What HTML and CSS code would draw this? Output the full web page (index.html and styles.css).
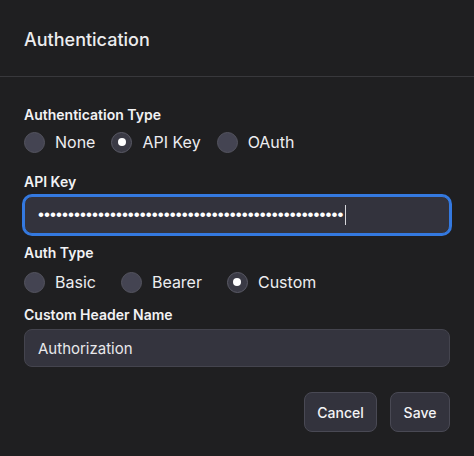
FILE: index.html
```html
<!DOCTYPE html>
<html lang="en">
<head>
<meta charset="utf-8">
<title>Authentication</title>
<link rel="stylesheet" href="styles.css">
</head>
<body>
<div class="dialog">
  <div class="header">
    <h2 class="title">Authentication</h2>
  </div>
  <div class="content">
    <div class="field">
      <div class="label">Authentication Type</div>
      <div class="radios radios-a">
        <label class="opt"><span class="radio"></span><span class="opt-text">None</span></label>
        <label class="opt"><span class="radio checked"></span><span class="opt-text">API Key</span></label>
        <label class="opt"><span class="radio"></span><span class="opt-text">OAuth</span></label>
      </div>
    </div>
    <div class="field field-key">
      <div class="label">API Key</div>
      <div class="input focused"><span class="dots">•••••••••••••••••••••••••••••••••••••••••••••••••••</span><span class="caret"></span></div>
    </div>
    <div class="field field-auth">
      <div class="label">Auth Type</div>
      <div class="radios radios-b">
        <label class="opt"><span class="radio"></span><span class="opt-text">Basic</span></label>
        <label class="opt"><span class="radio"></span><span class="opt-text">Bearer</span></label>
        <label class="opt"><span class="radio checked"></span><span class="opt-text">Custom</span></label>
      </div>
    </div>
    <div class="field field-header">
      <div class="label">Custom Header Name</div>
      <div class="input"><span class="value">Authorization</span></div>
    </div>
    <div class="actions">
      <button class="btn btn-cancel">Cancel</button>
      <button class="btn btn-save">Save</button>
    </div>
  </div>
</div>
</body>
</html>
```
FILE: styles.css
```css
* { box-sizing: border-box; }
html, body {
  margin: 0;
  padding: 0;
  background: #1f1f21;
}
body {
  font-family: Inter, "Noto Sans", sans-serif;
  color: #ececee;
  width: 474px;
  height: 456px;
  overflow: hidden;
}
.dialog {
  width: 474px;
  height: 456px;
  background: #1f1f21;
}
.header {
  height: 77px;
  padding: 0 24px;
  display: flex;
  align-items: center;
  border-bottom: 1px solid #38383c;
}
.title {
  margin: 0;
  padding-top: 4px;
  font-size: 18px;
  font-weight: 500;
  line-height: 24px;
  color: #ececee;
}
.content {
  padding: 28px 24px 0;
  display: flex;
  flex-direction: column;
}
.field {
  display: flex;
  flex-direction: column;
}
.label {
  font-size: 14px;
  font-weight: 600;
  line-height: 20px;
  color: #f2f2f4;
}
.radios {
  display: flex;
  align-items: center;
  margin-top: 6px;
  height: 22px;
}
.radios-a { gap: 16px; }
.radios-b { gap: 25px; margin-top: 8px; }
.opt {
  display: flex;
  align-items: center;
  gap: 10px;
}
.radio {
  width: 21px;
  height: 21px;
  border-radius: 50%;
  background: #444452;
  border: 1px solid #54545f;
  display: flex;
  align-items: center;
  justify-content: center;
}
.radio.checked {
  background: #3a3a45;
  border-color: #5a5a66;
}
.radio.checked::after {
  content: "";
  width: 8px;
  height: 8px;
  border-radius: 50%;
  background: #ffffff;
}
.opt-text {
  font-size: 16px;
  line-height: 20px;
  color: #ededf0;
}
.field-key { margin-top: 19px; }
.field-key .input { margin-top: 4px; }
.field-auth { margin-top: 9px; }
.field-header { margin-top: 12px; }
.field-header .input { margin-top: 4px; }
.input {
  margin-top: 3px;
  height: 38px;
  border-radius: 8px;
  background: #34343e;
  border: 1px solid #44444e;
  display: flex;
  align-items: center;
  padding: 0 13px;
}
.input.focused {
  border: 1px solid #3479e0;
  box-shadow: 0 0 0 2px #3479e0;
  background: #33333d;
}
.dots {
  font-family: "Liberation Sans", Arial, sans-serif;
  font-size: 17px;
  color: #ffffff;
  letter-spacing: 0.04px;
  line-height: 20px;
}
.caret {
  width: 1px;
  height: 20px;
  background: #d8d8dc;
  margin-left: 1px;
}
.value {
  font-size: 15px;
  color: #e8e8eb;
}
.actions {
  margin-top: 25px;
  display: flex;
  justify-content: flex-end;
  gap: 13px;
}
.btn {
  height: 40px;
  border-radius: 8px;
  background: #33333d;
  border: 1px solid #494954;
  color: #f4f4f6;
  font-family: Inter, "Noto Sans", sans-serif;
  font-size: 14px;
  font-weight: 500;
  padding: 0;
}
.btn-cancel { width: 73px; }
.btn-save { width: 60px; }
```
